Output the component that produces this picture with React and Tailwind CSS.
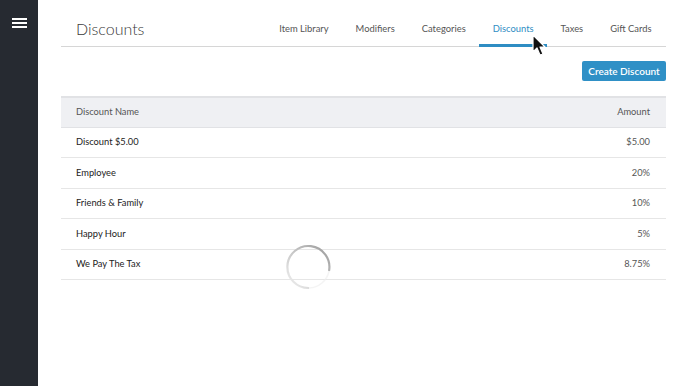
const tabs = ["Item Library", "Modifiers", "Categories", "Discounts", "Taxes", "Gift Cards"];

const discounts = [
  { name: "Discount $5.00", amount: "$5.00" },
  { name: "Employee", amount: "20%" },
  { name: "Friends & Family", amount: "10%" },
  { name: "Happy Hour", amount: "5%" },
  { name: "We Pay The Tax", amount: "8.75%" },
];

const Spinner = () => (
  <svg width="48" height="48" viewBox="0 0 48 48" className="absolute left-[285px] top-[243px]">
    <defs>
      <linearGradient id="spin" x1="1" y1="0" x2="0" y2="1">
        <stop offset="0" stopColor="#9a9a9a" />
        <stop offset="1" stopColor="#f2f2f2" />
      </linearGradient>
    </defs>
    <path d="M44 28 A21 21 0 1 0 24 45" fill="none" stroke="url(#spin)" strokeWidth="2.2" />
    <path d="M24 45 A21 21 0 0 0 44 28" fill="none" stroke="#ececec" strokeWidth="1.5" opacity="0.6" />
  </svg>
);

const Cursor = () => (
  <svg width="16" height="24" viewBox="0 0 16 24" className="absolute left-[532px] top-[34px]">
    <path d="M1 1 L1 18 L5 14 L8 21 L11 20 L8 13 L13 13 Z" fill="#111" stroke="#fff" strokeWidth="1.2" strokeLinejoin="round" />
  </svg>
);

export default function App() {
  return (
    <div className="relative flex h-[386px] w-[686px] overflow-hidden bg-white font-['Lato',sans-serif]">
      <aside className="flex w-[38px] shrink-0 justify-center bg-[#262a31] pt-[18px]">
        <div className="flex h-[10px] w-[15px] flex-col justify-between">
          <span className="h-[2px] bg-white" />
          <span className="h-[2px] bg-white" />
          <span className="h-[2px] bg-white" />
        </div>
      </aside>

      <main className="ml-[23px] w-[605px]">
        <header className="flex h-[47px] items-end justify-between border-b border-[#d6d6d6]">
          <h1 className="pb-[5px] pl-[15px] text-[16px] font-light text-[#3a3a3a]">Discounts</h1>
          <nav className="flex pr-[1px]">
            {tabs.map((tab) => (
              <div
                key={tab}
                className={
                  tab === "Discounts"
                    ? "-mb-px border-b-[3px] border-[#2e8dc3] px-[13.5px] pb-[8px] text-[9.4px] text-[#2e8dc3]"
                    : "px-[13.5px] pb-[10px] text-[9.4px] text-[#555]"
                }
              >
                {tab}
              </div>
            ))}
          </nav>
        </header>

        <div className="flex justify-end pt-[14px]">
          <button
            type="button"
            className="h-[20px] w-[84px] rounded-[2px] bg-[#2f90c6] text-[10px] font-semibold text-white"
          >
            Create Discount
          </button>
        </div>

        <table className="mt-[15px] w-full border-collapse text-[9.3px]">
          <thead>
            <tr className="h-[30px] border-t-2 border-b border-[#e1e2e5] bg-[#eff0f3] text-[#555]">
              <th className="pl-[15px] text-left font-normal">Discount Name</th>
              <th className="pr-[16px] text-right font-normal">Amount</th>
            </tr>
          </thead>
          <tbody>
            {discounts.map((d) => (
              <tr key={d.name} className="h-[30.5px] border-b border-[#e6e6e6]">
                <td className="pl-[15px] text-[#222]">{d.name}</td>
                <td className="pr-[16px] text-right text-[#555]">{d.amount}</td>
              </tr>
            ))}
          </tbody>
        </table>
      </main>

      <Spinner />
      <Cursor />
    </div>
  );
}
